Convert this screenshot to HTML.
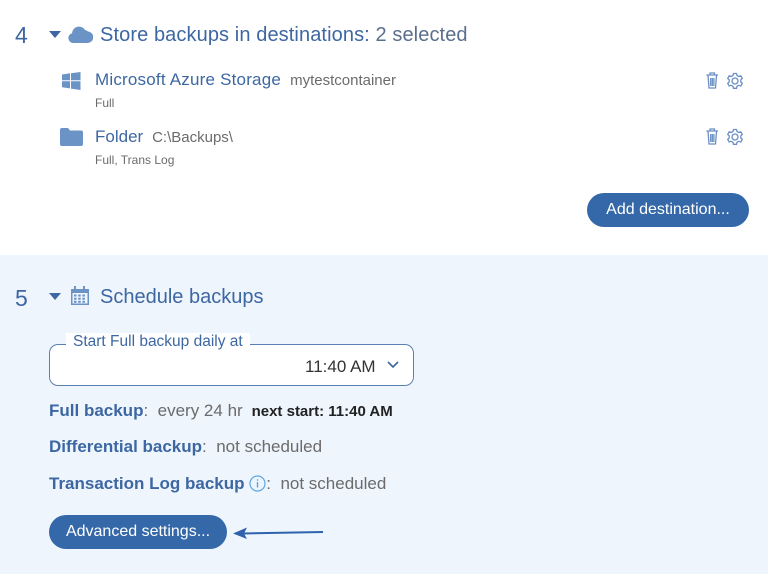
<!DOCTYPE html>
<html><head><meta charset="utf-8"><style>
*{margin:0;padding:0;box-sizing:border-box}
body{width:768px;height:574px;overflow:hidden;font-family:"Liberation Sans",sans-serif;background:#fff;position:relative}
.a{position:absolute;white-space:nowrap}
.blue{color:#3d67a2}
.grey{color:#6b6b6b}
.btn{position:absolute;background:#3568a8;color:#fff;border-radius:18px;font-size:16px;text-align:center;line-height:34px;height:34px}
</style></head><body>
<div class="a" style="left:0;top:255px;width:768px;height:319px;background:#eef5fd"></div>

<div class="a blue" style="left:15px;top:22px;font-size:23px">4</div>
<svg class="a" style="left:49px;top:31px" width="13" height="8"><path d="M0 0H12L6 7Z" fill="#3d67a2"/></svg>
<svg class="a" style="left:67px;top:25px" width="26" height="20" viewBox="0 0 26 20"><path d="M6 18a5 5 0 0 1-1-9.8A7 7 0 0 1 18 5a5 5 0 0 1 3 1.5A5.5 5.5 0 0 1 20 18Z" fill="#6b93c6"/></svg>
<div class="a blue" style="left:100px;top:24px;font-size:20px;letter-spacing:0.1px">Store backups in destinations:<span style="color:#5a6f8c"> 2 selected</span></div>

<svg class="a" style="left:62px;top:72px" width="19" height="18"><path d="M0 2.5L8 1.3V8.3H0ZM9 1.2L18.5 0V8.3H9ZM0 9.3H8V16.4L0 15.3ZM9 9.3H18.5V18L9 16.6Z" fill="#6b93c6"/></svg>
<div class="a blue" style="left:95px;top:70px;font-size:17px;letter-spacing:0.2px">Microsoft Azure Storage <span class="grey" style="font-size:15px;letter-spacing:0">&nbsp;mytestcontainer</span></div>
<div class="a grey" style="left:95px;top:96px;font-size:12px">Full</div>

<svg class="a" style="left:60px;top:128px" width="23" height="18"><path d="M0 2a2 2 0 0 1 2-2h6l2 2.5h11a2 2 0 0 1 2 2V16a2 2 0 0 1-2 2H2a2 2 0 0 1-2-2Z" fill="#6b93c6"/></svg>
<div class="a blue" style="left:95px;top:127px;font-size:17px">Folder <span class="grey" style="font-size:15px">&nbsp;C:\Backups\</span></div>
<div class="a grey" style="left:95px;top:153px;font-size:12px">Full, Trans Log</div>

<svg class="a" style="left:705px;top:71px" width="42" height="20"><g fill="none" stroke="#6b8fc3" stroke-width="1.3"><path d="M1.5 4H13M5 4V2H9.5V4M3 4.5L4 17H10.5L11.5 4.5M5.7 7V15M7.3 7V15M8.9 7V15"/><circle cx="30" cy="10" r="3"/><path d="M28.5 2.5h3l.5 2 1.8 1 2-.7 1.5 2.6-1.5 1.4v2.2l1.5 1.4-1.5 2.6-2-.7-1.8 1-.5 2h-3l-.5-2-1.8-1-2 .7-1.5-2.6 1.5-1.4V8.8l-1.5-1.4 1.5-2.6 2 .7 1.8-1Z"/></g></svg>
<svg class="a" style="left:705px;top:127px" width="42" height="20"><g fill="none" stroke="#6b8fc3" stroke-width="1.3"><path d="M1.5 4H13M5 4V2H9.5V4M3 4.5L4 17H10.5L11.5 4.5M5.7 7V15M7.3 7V15M8.9 7V15"/><circle cx="30" cy="10" r="3"/><path d="M28.5 2.5h3l.5 2 1.8 1 2-.7 1.5 2.6-1.5 1.4v2.2l1.5 1.4-1.5 2.6-2-.7-1.8 1-.5 2h-3l-.5-2-1.8-1-2 .7-1.5-2.6 1.5-1.4V8.8l-1.5-1.4 1.5-2.6 2 .7 1.8-1Z"/></g></svg>

<div class="btn" style="left:587px;top:193px;width:162px">Add destination...</div>

<div class="a blue" style="left:15px;top:285px;font-size:23px">5</div>
<svg class="a" style="left:49px;top:293px" width="13" height="8"><path d="M0 0H12L6 7Z" fill="#3d67a2"/></svg>
<svg class="a" style="left:70px;top:286px" width="20" height="20"><g fill="#6b93c6"><rect x="4" y="0" width="2" height="4"/><rect x="13" y="0" width="2" height="4"/><path d="M1 3H19V19H1ZM2.5 7V17.5H17.5V7Z"/><g><rect x="4" y="8.5" width="2.5" height="2"/><rect x="8.2" y="8.5" width="2.5" height="2"/><rect x="12.4" y="8.5" width="2.5" height="2"/><rect x="4" y="11.7" width="2.5" height="2"/><rect x="8.2" y="11.7" width="2.5" height="2"/><rect x="12.4" y="11.7" width="2.5" height="2"/><rect x="4" y="14.8" width="2.5" height="2"/><rect x="8.2" y="14.8" width="2.5" height="2"/><rect x="12.4" y="14.8" width="2.5" height="2"/></g></g></svg>
<div class="a blue" style="left:100px;top:286px;font-size:20px">Schedule backups</div>

<div class="a" style="left:49px;top:344px;width:365px;height:42px;border:1.3px solid #5c7fb3;border-radius:9px;background:#fff"></div>
<div class="a blue" style="left:66px;top:333px;font-size:15.5px;background:#fff;padding:0 7px;height:14px;line-height:18px">Start Full backup daily at</div>
<div class="a" style="left:305px;top:357px;font-size:17px;color:#333">11:40 AM</div>
<svg class="a" style="left:387px;top:361px" width="12" height="8"><path d="M1 1L6 6L11 1" fill="none" stroke="#3d67a2" stroke-width="1.6"/></svg>

<div class="a" style="left:49px;top:401px;font-size:17px"><b class="blue">Full backup</b><span class="grey">:&nbsp; every 24 hr</span> <b style="font-size:15px;color:#222">&nbsp;next start: 11:40 AM</b></div>
<div class="a" style="left:49px;top:437px;font-size:17px"><b class="blue">Differential backup</b><span class="grey">:&nbsp; not scheduled</span></div>
<div class="a" style="left:49px;top:474px;font-size:17px"><b class="blue">Transaction Log backup</b> <svg width="17" height="17" style="vertical-align:-3px"><circle cx="8.5" cy="8.5" r="7.5" fill="none" stroke="#5ba7e0" stroke-width="1.2"/><rect x="7.8" y="7" width="1.4" height="5.5" fill="#5ba7e0"/><rect x="7.8" y="4.3" width="1.4" height="1.4" fill="#5ba7e0"/></svg><span class="grey">:&nbsp; not scheduled</span></div>

<div class="btn" style="left:49px;top:515px;width:178px">Advanced settings...</div>
<svg class="a" style="left:233px;top:524px" width="92" height="18"><path d="M10 9.5L90 8" stroke="#2f62ad" stroke-width="2"/><path d="M0 9.5L14 3.5L11 9.5L14 15Z" fill="#2f62ad"/></svg>
</body></html>
